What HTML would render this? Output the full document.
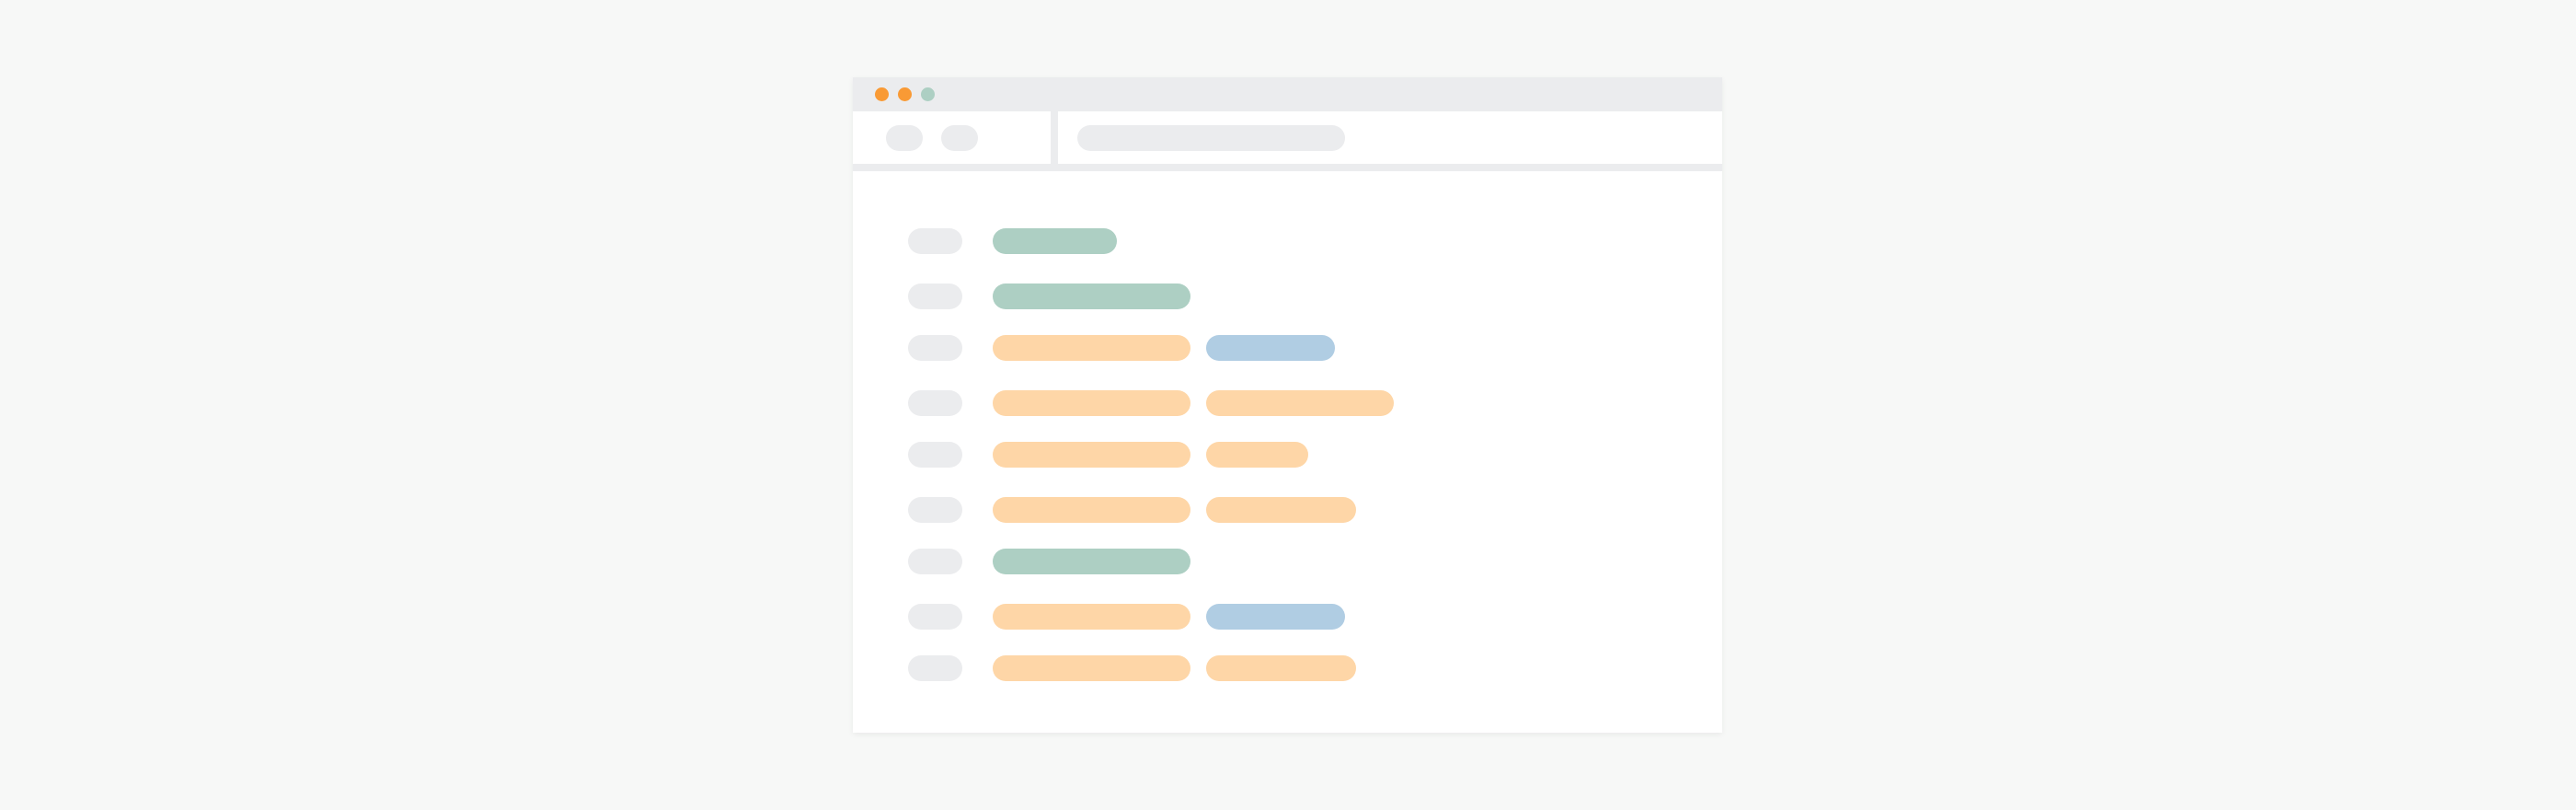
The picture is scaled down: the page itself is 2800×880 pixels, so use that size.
<!DOCTYPE html>
<html><head><style>
html,body{margin:0;padding:0}
body{width:2800px;height:880px;background:#f7f8f7;position:relative;overflow:hidden}
.a{position:absolute}
.p{position:absolute;height:28px;border-radius:14px}
.g{background:#ebecee}.gr{background:#adcfc3}.o{background:#fed6a7}.b{background:#b0cde3}
</style></head><body>
<div class="a" style="left:927px;top:84px;width:945px;height:712px;background:#fff;box-shadow:0 2px 6px rgba(0,0,0,0.06)"></div>
<div class="a" style="left:927px;top:84px;width:945px;height:37px;background:#ebecee"></div>
<div class="a" style="left:951px;top:95px;width:15px;height:15px;border-radius:50%;background:#f99a35"></div>
<div class="a" style="left:976px;top:95px;width:15px;height:15px;border-radius:50%;background:#f99a35"></div>
<div class="a" style="left:1001px;top:95px;width:15px;height:15px;border-radius:50%;background:#adcfc3"></div>
<div class="a" style="left:927px;top:178px;width:945px;height:8px;background:#ebecee"></div>
<div class="a" style="left:1142px;top:121px;width:8px;height:57px;background:#ebecee"></div>
<div class="p g" style="left:963px;top:136px;width:40px"></div>
<div class="p g" style="left:1023px;top:136px;width:40px"></div>
<div class="p g" style="left:1171px;top:136px;width:291px"></div>

<div class="p g" style="left:987px;top:248px;width:59px"></div>
<div class="p gr" style="left:1079px;top:248px;width:135px"></div>

<div class="p g" style="left:987px;top:308px;width:59px"></div>
<div class="p gr" style="left:1079px;top:308px;width:215px"></div>

<div class="p g" style="left:987px;top:364px;width:59px"></div>
<div class="p o" style="left:1079px;top:364px;width:215px"></div>
<div class="p b" style="left:1311px;top:364px;width:140px"></div>

<div class="p g" style="left:987px;top:424px;width:59px"></div>
<div class="p o" style="left:1079px;top:424px;width:215px"></div>
<div class="p o" style="left:1311px;top:424px;width:204px"></div>

<div class="p g" style="left:987px;top:480px;width:59px"></div>
<div class="p o" style="left:1079px;top:480px;width:215px"></div>
<div class="p o" style="left:1311px;top:480px;width:111px"></div>

<div class="p g" style="left:987px;top:540px;width:59px"></div>
<div class="p o" style="left:1079px;top:540px;width:215px"></div>
<div class="p o" style="left:1311px;top:540px;width:163px"></div>

<div class="p g" style="left:987px;top:596px;width:59px"></div>
<div class="p gr" style="left:1079px;top:596px;width:215px"></div>

<div class="p g" style="left:987px;top:656px;width:59px"></div>
<div class="p o" style="left:1079px;top:656px;width:215px"></div>
<div class="p b" style="left:1311px;top:656px;width:151px"></div>

<div class="p g" style="left:987px;top:712px;width:59px"></div>
<div class="p o" style="left:1079px;top:712px;width:215px"></div>
<div class="p o" style="left:1311px;top:712px;width:163px"></div>
</body></html>
